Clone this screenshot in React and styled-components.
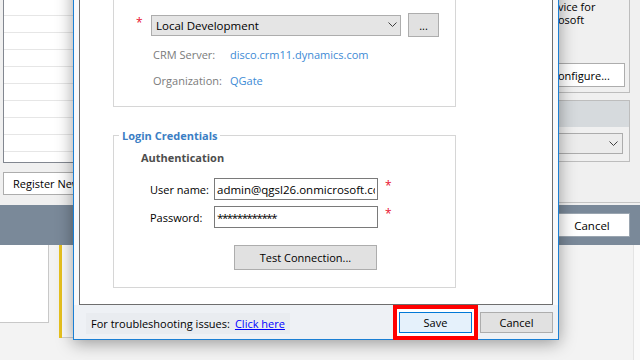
import React from "react";
import styled, { createGlobalStyle } from "styled-components";

const GlobalStyle = createGlobalStyle`
  html, body {
    margin: 0;
    padding: 0;
  }
  body {
    font-family: "Open Sans", "Noto Sans", sans-serif;
    font-size: 11px;
    color: #000;
  }
  * {
    box-sizing: border-box;
  }
`;

const Screen = styled.div`
  position: relative;
  width: 640px;
  height: 360px;
  overflow: hidden;
  background: #f0f0f0;
  display: flex;
  flex-direction: column;
`;

const Band = styled.div`
  display: grid;
  grid-template-columns: 73px 486px 81px;
  height: ${({ $h }) => $h};
  flex: ${({ $grow }) => ($grow ? 1 : "none")};
  background: ${({ $bg }) => $bg || "transparent"};
`;

/* ---------- background window, left side ---------- */

const LeftTop = styled.div`
  display: flex;
  flex-direction: column;
  padding-left: 3px;
  margin-right: -12px;
`;

const ListBox = styled.div`
  margin-top: -2px;
  height: 165px;
  background: #fff;
  border: 1px solid #828790;
  border-right: none;
  overflow: hidden;
`;

const ListRow = styled.div`
  height: 17px;
  border-bottom: 1px solid #e6e6e6;
`;

const RegisterButton = styled.div`
  margin-top: 9px;
  height: 23px;
  background: #fff;
  border: 1px solid #adadad;
  padding-left: 9px;
  display: flex;
  align-items: center;
  font-size: 11px;
  white-space: nowrap;
  overflow: hidden;
`;

const LeftBottom = styled.div`
  display: flex;
  align-items: flex-start;
  margin-right: -12px;
`;

const WhitePanel = styled.div`
  width: 49px;
  height: 78px;
  background: #fff;
  border-right: 1px solid #c8c8c8;
  border-bottom: 1px solid #c8c8c8;
`;

const YellowBar = styled.div`
  margin-left: 10px;
  width: 3px;
  height: 93px;
  background: #e8c21e;
`;

const WhiteStrip = styled.div`
  flex: 1;
  height: 93px;
  background: #fbfbfb;
  border-bottom: 1px solid #cfcfcf;
`;

/* ---------- background window, right side ---------- */

const RightTop = styled.div`
  display: flex;
  flex-direction: column;
  padding-right: 10px;
`;

const SideGroup = styled.div`
  margin-left: -8px;
  border: 1px solid #bdbdbd;
  display: flex;
  flex-direction: column;
`;

const ServiceGroup = styled(SideGroup)`
  margin-top: -2px;
  height: 95px;
  padding: 1px 0 0 6px;
`;

const SideText = styled.div`
  height: 13px;
  line-height: 13px;
  white-space: nowrap;
`;

const ConfigureButton = styled.div`
  margin: 37px 4px 0 -10px;
  height: 24px;
  background: #fff;
  border: 1px solid #adadad;
  display: flex;
  align-items: center;
  padding-left: 9px;
  white-space: nowrap;
`;

const OptionsGroup = styled(SideGroup)`
  margin-top: 7px;
  height: 62px;
`;

const OptionsHeader = styled.div`
  height: 26px;
  background: #d6dadd;
`;

const SideSelect = styled.div`
  margin: 6px 6px 0 -4px;
  height: 21px;
  background: #ececec;
  border: 1px solid #acacac;
  display: flex;
  align-items: center;
  justify-content: flex-end;
  padding-right: 4px;
`;

const Separator = styled.div`
  margin-top: auto;
  margin-bottom: 2px;
  margin-left: -8px;
  margin-right: -10px;
  height: 1px;
  background: #c4c4c4;
`;

const BarButton = styled.div`
  grid-column: 3;
  margin: 8px 10px 0 -5px;
  height: 24px;
  background: #fff;
  border: 1px solid #9aa5b0;
  display: flex;
  align-items: center;
  justify-content: center;
  font-size: 11.5px;
`;

const RightBottom = styled.div`
  grid-column: 3;
  display: flex;
  justify-content: flex-end;
`;

const EdgeStrip = styled.div`
  width: 7px;
  background: #fafafa;
  border-left: 1px solid #e4e4e4;
`;

/* ---------- dialog ---------- */

const Dialog = styled.div`
  position: absolute;
  left: 73px;
  top: -60px;
  width: 486px;
  height: 400px;
  border: 1px solid #1a7fd4;
  background: #f8f9fb;
  box-shadow: 0 3px 16px rgba(0, 0, 0, 0.38);
  display: flex;
  flex-direction: column;
  z-index: 2;
`;

const DialogBody = styled.div`
  flex: 1;
  display: flex;
  padding: 0 5px;
`;

const ContentPanel = styled.div`
  flex: 1;
  background: #fff;
  border: 1px solid #6e6e6e;
  display: flex;
  flex-direction: column;
  justify-content: flex-end;
  padding: 0 0 16px 33px;
`;

const GroupBox = styled.div`
  width: 343px;
  border: 1px solid #d6d6d6;
  display: flex;
  flex-direction: column;
`;

const ConnectionGroup = styled(GroupBox)`
  flex: 1;
  justify-content: flex-end;
  padding-bottom: 17px;
`;

const CredentialsGroup = styled(GroupBox)`
  margin-top: 28px;
  height: 153px;
`;

const Legend = styled.div`
  margin: -8px 0 0 5px;
  padding: 0 3px;
  width: fit-content;
  line-height: 16px;
  background: #fff;
  color: #3b7ec4;
  font-weight: 700;
`;

const SubHeading = styled.div`
  margin: 6px 0 0 27px;
  line-height: 16px;
  color: #4d4d4d;
  font-weight: 700;
`;

const SelectRow = styled.div`
  display: flex;
  align-items: center;
  height: 24px;
  padding-left: 22px;
`;

const Required = styled.span`
  width: ${({ $w }) => $w || "auto"};
  align-self: flex-start;
  margin-top: ${({ $top }) => $top || "0"};
  margin-left: ${({ $left }) => $left || "0"};
  color: #e8112d;
  font-size: 12px;
  line-height: 12px;
`;

const Select = styled.div`
  width: 250px;
  height: 21px;
  background: #e5e5e5;
  border: 1px solid #adadad;
  display: flex;
  align-items: center;
  justify-content: space-between;
  padding: 0 3px 0 4px;
  font-size: 11.5px;
`;

const Button = styled.div`
  width: ${({ $w }) => $w};
  height: ${({ $h }) => $h || "21px"};
  margin-left: ${({ $ml }) => $ml || "0"};
  margin-top: ${({ $mt }) => $mt || "0"};
  background: ${({ $primary }) => ($primary ? "#e5f1fb" : "#e1e1e1")};
  border: 1px solid ${({ $primary }) => ($primary ? "#0078d7" : "#adadad")};
  display: flex;
  align-items: center;
  justify-content: center;
  line-height: 1;
  flex: none;
`;

const InfoRow = styled.div`
  display: flex;
  margin-top: 10px;
  padding-left: 39px;
  line-height: 16px;
`;

const InfoLabel = styled.span`
  width: 77px;
  color: #7b7b7b;
`;

const InfoValue = styled.span`
  color: #3d8ad5;
`;

const FormGrid = styled.div`
  margin: 12px 0 0 36px;
  display: grid;
  grid-template-columns: 64px 164px auto;
  grid-auto-rows: 22px;
  row-gap: 6px;
  align-items: center;
`;

const FieldLabel = styled.label`
  color: #000;
`;

const TextInput = styled.input`
  width: 164px;
  height: 22px;
  border: 1px solid #7a7a7a;
  padding: 0 2px;
  font: inherit;
  font-size: 11.5px;
  letter-spacing: ${({ $masked }) => ($masked ? "-1.4px" : "0")};
  color: #000;
  background: #fff;
  outline: none;
`;

const Footer = styled.div`
  height: 34px;
  display: flex;
  align-items: flex-start;
  padding-right: 5px;
  background: #eef1f5;
`;

const HelpBox = styled.div`
  margin: 8px 0 0 12px;
  height: 21px;
  padding: 0 5px;
  display: flex;
  align-items: center;
  background: #e9ecf0;
  white-space: nowrap;
`;

const HelpLink = styled.a`
  margin-left: 5px;
  color: #0000ff;
  text-decoration: underline;
`;

const Highlight = styled.div`
  margin-left: auto;
  border: 4px solid #ff0000;
  padding: 3px 2px;
  background: #fff;
`;

const Chevron = () => (
  <svg width="9" height="6" viewBox="0 0 9 6">
    <polyline points="0.5,0.5 4.5,4.5 8.5,0.5" fill="none" stroke="#404040" strokeWidth="1" />
  </svg>
);

export default function App() {
  return (
    <>
      <GlobalStyle />
      <Screen>
        <Band $h="205px">
          <LeftTop>
            <ListBox>
              {Array.from({ length: 10 }).map((_, i) => (
                <ListRow key={i} />
              ))}
            </ListBox>
            <RegisterButton>Register New...</RegisterButton>
          </LeftTop>
          <div />
          <RightTop>
            <ServiceGroup>
              <SideText>vice for</SideText>
              <SideText>osoft</SideText>
              <ConfigureButton>onfigure...</ConfigureButton>
            </ServiceGroup>
            <OptionsGroup>
              <OptionsHeader />
              <SideSelect>
                <Chevron />
              </SideSelect>
            </OptionsGroup>
            <Separator />
          </RightTop>
        </Band>

        <Band $h="40px" $bg="#7a8999">
          <BarButton>Cancel</BarButton>
        </Band>

        <Band $grow $bg="#f3f3f3">
          <LeftBottom>
            <WhitePanel />
            <YellowBar />
            <WhiteStrip />
          </LeftBottom>
          <div />
          <RightBottom>
            <EdgeStrip />
          </RightBottom>
        </Band>

        <Dialog>
          <DialogBody>
            <ContentPanel>
              <ConnectionGroup>
                <SelectRow>
                  <Required $w="15px" $top="4px">*</Required>
                  <Select>
                    <span>Local Development</span>
                    <Chevron />
                  </Select>
                  <Button $w="31px" $h="24px" $ml="7px">...</Button>
                </SelectRow>
                <InfoRow>
                  <InfoLabel>CRM Server:</InfoLabel>
                  <InfoValue>disco.crm11.dynamics.com</InfoValue>
                </InfoRow>
                <InfoRow>
                  <InfoLabel>Organization:</InfoLabel>
                  <InfoValue>QGate</InfoValue>
                </InfoRow>
              </ConnectionGroup>

              <CredentialsGroup>
                <Legend>Login Credentials</Legend>
                <SubHeading>Authentication</SubHeading>
                <FormGrid>
                  <FieldLabel>User name:</FieldLabel>
                  <TextInput readOnly value="admin@qgsl26.onmicrosoft.com" />
                  <Required $left="7px" $top="2px">*</Required>
                  <FieldLabel>Password:</FieldLabel>
                  <TextInput $masked readOnly value="************" />
                  <Required $left="7px" $top="2px">*</Required>
                </FormGrid>
                <Button $w="143px" $h="25px" $ml="120px" $mt="17px">
                  Test Connection...
                </Button>
              </CredentialsGroup>
            </ContentPanel>
          </DialogBody>
          <Footer>
            <HelpBox>
              For troubleshooting issues:
              <HelpLink href="#">Click here</HelpLink>
            </HelpBox>
            <Highlight>
              <Button $primary $w="73px">Save</Button>
            </Highlight>
            <Button $w="73px" $ml="2px" $mt="7px">Cancel</Button>
          </Footer>
        </Dialog>
      </Screen>
    </>
  );
}
